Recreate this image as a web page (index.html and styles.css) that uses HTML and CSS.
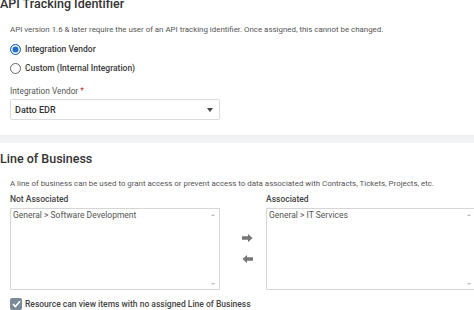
FILE: index.html
```html
<!DOCTYPE html>
<html>
<head>
<meta charset="utf-8">
<link rel="stylesheet" href="styles.css">
</head>
<body>
<div class="page">
  <section class="sec">
    <h2 class="title first">API Tracking Identifier</h2>
    <p class="desc d1">API version 1.6 &amp; later require the user of an API tracking identifier. Once assigned, this cannot be changed.</p>
    <div class="radios">
      <label class="radio"><span class="dot on"></span>Integration Vendor</label>
      <label class="radio"><span class="dot"></span>Custom (Internal Integration)</label>
    </div>
    <div class="field-label">Integration Vendor <span class="req">*</span></div>
    <div class="select"><span>Datto EDR</span><span class="caret"></span></div>
  </section>
  <div class="band"></div>
  <section class="sec">
    <h2 class="title second">Line of Business</h2>
    <p class="desc d2">A line of business can be used to grant access or prevent access to data associated with Contracts, Tickets, Projects, etc.</p>
    <div class="lists">
      <div class="col">
        <div class="list-label">Not Associated</div>
        <div class="listbox">
          <div class="items"><div class="item">General &gt; Software Development</div></div>
          <div class="scroll"><span class="up"></span><span class="down"></span></div>
        </div>
      </div>
      <div class="movers">
        <svg width="11" height="10" viewBox="0 0 12 10"><path d="M0 3.2h6.5V0.5L11.5 5 6.5 9.5V6.8H0z" fill="#777"/></svg>
        <svg width="11" height="10" viewBox="0 0 12 10"><path d="M12 3.2H5.5V0.5L0.5 5 5.5 9.5V6.8H12z" fill="#777"/></svg>
      </div>
      <div class="col">
        <div class="list-label">Associated</div>
        <div class="listbox">
          <div class="items"><div class="item">General &gt; IT Services</div></div>
          <div class="scroll"><span class="up"></span><span class="down"></span></div>
        </div>
      </div>
    </div>
    <label class="check"><span class="box"><svg width="9" height="8" viewBox="0 0 9 8"><path d="M1 4.2 3.4 6.5 8 1.3" fill="none" stroke="#fff" stroke-width="1.6"/></svg></span>Resource can view items with no assigned Line of Business</label>
  </section>
</div>
</body>
</html>
```
FILE: styles.css
```css
html, body {
  margin: 0;
  padding: 0;
  background: #fff;
  overflow: hidden;
}
body {
  font-family: Roboto, "Liberation Sans", sans-serif;
  color: #444;
  width: 474px;
  height: 310px;
}
.page {
  width: 474px;
}
.sec {
  padding-left: 10px;
}
.title {
  margin: 0 0 0 -10px;
  font-size: 12.5px;
  line-height: 14px;
  font-weight: 500;
  color: #333;
}
.title.first {
  margin-top: -3px;
}
.title.second {
  margin-top: 9px;
}
.desc {
  margin: 0;
  font-size: 7.9px;
  line-height: 12px;
  color: #555;
  white-space: nowrap;
}
.d1 { margin-top: 13px; }
.d2 { margin-top: 12px; }
.radios {
  margin-top: 6px;
  display: flex;
  flex-direction: column;
  gap: 5px;
}
.radio {
  display: flex;
  align-items: center;
  height: 14px;
  font-size: 8.5px;
  font-weight: 500;
  color: #3a3a3a;
  gap: 4px;
}
.dot {
  box-sizing: border-box;
  width: 11px;
  height: 11px;
  border-radius: 50%;
  border: 1px solid #666;
  background: #fff;
}
.dot.on {
  border: 1.5px solid #1f6fc5;
  background: #1f6fc5;
  box-shadow: inset 0 0 0 1.5px #fff;
}
.field-label {
  margin-top: 10px;
  font-size: 8.3px;
  line-height: 12px;
  color: #555;
}
.req { color: #b33; }
.select {
  margin-top: 2px;
  box-sizing: border-box;
  width: 210px;
  height: 21px;
  border: 1px solid #dcdcdc;
  border-radius: 2px;
  display: flex;
  align-items: center;
  justify-content: space-between;
  padding: 0 6px 0 4px;
  font-size: 9px;
  font-weight: 500;
  color: #333;
}
.caret {
  width: 0;
  height: 0;
  border-left: 3.5px solid transparent;
  border-right: 3.5px solid transparent;
  border-top: 4px solid #444;
}
.band {
  margin-top: 15px;
  height: 8px;
  background: linear-gradient(#eef0f2, #f4f5f7);
}
.lists {
  margin-top: 3px;
  display: flex;
}
.col {
  width: 210px;
  flex: none;
}
.list-label {
  font-size: 8.5px;
  line-height: 12px;
  font-weight: 500;
  color: #444;
}
.listbox {
  margin-top: 3px;
  box-sizing: border-box;
  height: 82px;
  border: 1px solid #d6d6d6;
  display: flex;
}
.items {
  flex: 1;
  padding: 1px 2px;
}
.item {
  font-size: 8.5px;
  line-height: 10px;
  color: #555;
}
.scroll {
  width: 12px;
  display: flex;
  flex-direction: column;
  justify-content: space-between;
  align-items: center;
  padding: 5px 0 4px;
}
.up, .down {
  width: 0;
  height: 0;
  border-left: 2px solid transparent;
  border-right: 2px solid transparent;
}
.up { border-bottom: 2.5px solid #bbb; }
.down { border-top: 2.5px solid #bbb; }
.movers {
  width: 46px;
  flex: none;
  display: flex;
  flex-direction: column;
  align-items: center;
  padding-top: 40px;
  padding-left: 8px;
  gap: 11px;
  box-sizing: border-box;
}
.check {
  margin-top: 8px;
  display: flex;
  align-items: center;
  gap: 3px;
  height: 12px;
  font-size: 8.5px;
  font-weight: 500;
  color: #444;
}
.box {
  width: 12px;
  height: 12px;
  border-radius: 2px;
  background: #7b8a99;
  display: flex;
  align-items: center;
  justify-content: center;
}
```
